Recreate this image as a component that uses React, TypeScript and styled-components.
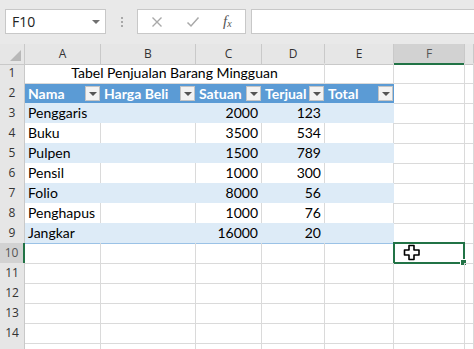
import React from "react";
import styled, { createGlobalStyle, css } from "styled-components";

const GlobalStyle = createGlobalStyle`
  html, body { margin: 0; padding: 0; background: #ffffff; }
  body { font-family: Lato, "Liberation Sans", sans-serif; overflow: hidden; }
`;

const COLS = "25px 76px 95px 66px 63px 69px 71px 1fr";
const GRID = "#dadada";
const GREEN = "#217346";
const BLUE = "#5b9bd5";
const BAND = "#ddebf7";
const LINE = "#9bc2e6";

type Row = { name: string; price: string; qty: number; sold: number };

const data: Row[] = [
  { name: "Penggaris", price: "", qty: 2000, sold: 123 },
  { name: "Buku", price: "", qty: 3500, sold: 534 },
  { name: "Pulpen", price: "", qty: 1500, sold: 789 },
  { name: "Pensil", price: "", qty: 1000, sold: 300 },
  { name: "Folio", price: "", qty: 8000, sold: 56 },
  { name: "Penghapus", price: "", qty: 1000, sold: 76 },
  { name: "Jangkar", price: "", qty: 16000, sold: 20 },
];

const headers = ["Nama", "Harga Beli", "Satuan", "Terjual", "Total"];
const letters = ["A", "B", "C", "D", "E", "F", ""];

export default function App() {
  return (
    <>
      <GlobalStyle />
      <Window>
        <FormulaBar>
          <NameBox>
            <span>F10</span>
            <Caret />
          </NameBox>
          <Grip>
            <i />
            <i />
            <i />
          </Grip>
          <FxBox>
            <svg width="12" height="12" viewBox="0 0 12 12">
              <path d="M1.5 1.5 L10.5 10.5 M10.5 1.5 L1.5 10.5" stroke="#a9a9a9" strokeWidth="1.4" fill="none" />
            </svg>
            <svg width="14" height="12" viewBox="0 0 14 12">
              <path d="M1.5 6.5 L5 10 L12.5 1.5" stroke="#a9a9a9" strokeWidth="1.5" fill="none" />
            </svg>
            <Fx>
              f<sub>x</sub>
            </Fx>
          </FxBox>
          <Input />
        </FormulaBar>

        <Sheet>
          <Line>
            <Corner />
            {letters.map((l, i) => (
              <ColHead key={i} active={l === "F"}>
                {l}
              </ColHead>
            ))}
          </Line>

          <Line>
            <RowHead>1</RowHead>
            <Title>Tabel Penjualan Barang Mingguan</Title>
            <Cell />
            <Cell />
            <Cell />
          </Line>

          <Line>
            <RowHead>2</RowHead>
            {headers.map((h) => (
              <Head key={h}>
                <span>{h}</span>
                <Filter />
              </Head>
            ))}
            <Cell />
            <Cell />
          </Line>

          {data.map((r, i) => {
            const band = i % 2 === 0;
            const last = i === data.length - 1;
            return (
              <Line key={r.name}>
                <RowHead>{i + 3}</RowHead>
                <Data band={band}>{r.name}</Data>
                <Data band={band}>{r.price}</Data>
                <Data band={band} right>
                  {r.qty}
                </Data>
                <Data band={band} right>
                  {r.sold}
                </Data>
                <Data band={band} edge={last} />
                <Cell />
                <Cell />
              </Line>
            );
          })}

          {[10, 11, 12, 13, 14, 15].map((n) => (
            <Line key={n}>
              <RowHead active={n === 10}>{n < 15 ? n : ""}</RowHead>
              {letters.map((l, i) => (
                <Cell key={i} selected={n === 10 && l === "F"}>
                  {n === 10 && l === "F" && (
                    <Pointer width="20" height="18" viewBox="0 0 20 18">
                      <path
                        d="M7 1.5 H12 V6 H17 V11 H12 V15.5 H7 V11 H2.5 V6 H7 Z"
                        fill="#fff"
                        stroke="#000"
                        strokeWidth="1.6"
                        strokeLinejoin="round"
                      />
                    </Pointer>
                  )}
                </Cell>
              ))}
            </Line>
          ))}
        </Sheet>
      </Window>
    </>
  );
}

const Window = styled.div`
  width: 474px;
  height: 349px;
  overflow: hidden;
  background: #e9e9e9;
`;

const FormulaBar = styled.div`
  height: 44px;
  display: flex;
  align-items: flex-start;
  padding: 9px 0 0 5px;
  box-sizing: border-box;
`;

const Box = styled.div`
  height: 25px;
  box-sizing: border-box;
  background: #fff;
  border: 1px solid #c8c8c8;
`;

const NameBox = styled(Box)`
  width: 101px;
  display: flex;
  align-items: center;
  justify-content: space-between;
  padding: 0 5px 0 6px;
  font-family: "Open Sans", sans-serif;
  font-size: 14px;
  color: #222;
`;

const Caret = styled.i`
  width: 0;
  height: 0;
  border-left: 4px solid transparent;
  border-right: 4px solid transparent;
  border-top: 4px solid #707070;
`;

const Grip = styled.div`
  width: 31px;
  height: 25px;
  display: flex;
  flex-direction: column;
  align-items: center;
  justify-content: center;
  gap: 2px;
  i {
    width: 2px;
    height: 2px;
    background: #a8a8a8;
  }
`;

const FxBox = styled(Box)`
  width: 109px;
  display: flex;
  align-items: center;
  padding-left: 13px;
  gap: 23px;
`;

const Fx = styled.span`
  font-family: "Liberation Serif", serif;
  font-style: italic;
  font-size: 15px;
  color: #555;
  sub {
    font-size: 10px;
    vertical-align: -1px;
  }
`;

const Input = styled(Box)`
  flex: 1;
  margin-left: 5px;
  border-right: none;
`;

const Sheet = styled.div`
  background: #fff;
`;

const Line = styled.div`
  display: grid;
  grid-template-columns: ${COLS};
  height: 20px;
  &:first-child {
    height: 19px;
  }
`;

const Corner = styled.div`
  background: #e6e6e6;
  border-right: 1px solid #c9c9c9;
  border-bottom: 1px solid #c9c9c9;
  position: relative;
  &::after {
    content: "";
    position: absolute;
    right: 3px;
    bottom: 3px;
    border-left: 11px solid transparent;
    border-bottom: 11px solid #b8b8b8;
  }
`;

const ColHead = styled.div<{ active?: boolean }>`
  background: ${(p) => (p.active ? "#d2d2d2" : "#e6e6e6")};
  border-right: 1px solid #c9c9c9;
  border-bottom: ${(p) => (p.active ? `2px solid ${GREEN}` : "1px solid #c9c9c9")};
  font-family: "Open Sans", sans-serif;
  font-size: 12px;
  line-height: 19px;
  text-align: center;
  color: ${(p) => (p.active ? "#555" : "#333")};
  box-sizing: border-box;
`;

const RowHead = styled.div<{ active?: boolean }>`
  background: ${(p) => (p.active ? "#d2d2d2" : "#e6e6e6")};
  border-right: ${(p) => (p.active ? `2px solid ${GREEN}` : "1px solid #c9c9c9")};
  border-bottom: 1px solid #d0d0d0;
  font-family: "Open Sans", sans-serif;
  font-size: 12px;
  line-height: 20px;
  text-align: center;
  color: ${(p) => (p.active ? "#555" : "#333")};
  box-sizing: border-box;
`;

const text = css`
  font-size: 14px;
  line-height: 19px;
  padding: 0 3px;
  white-space: nowrap;
  overflow: hidden;
  box-sizing: border-box;
`;

const Cell = styled.div<{ selected?: boolean }>`
  ${text};
  border-right: 1px solid ${GRID};
  border-bottom: 1px solid ${GRID};
  position: relative;
  overflow: visible;
  ${(p) =>
    p.selected &&
    css`
      &::before {
        content: "";
        position: absolute;
        left: -1px;
        top: -1px;
        right: -1px;
        bottom: -1px;
        border: 2px solid ${GREEN};
      }
      &::after {
        content: "";
        position: absolute;
        right: -3px;
        bottom: -3px;
        width: 5px;
        height: 5px;
        background: ${GREEN};
        border: 1px solid #fff;
      }
    `}
`;

const Title = styled(Cell)`
  grid-column: span 4;
  text-align: center;
  color: #000;
`;

const Head = styled.div`
  ${text};
  background: ${BLUE};
  color: #fff;
  font-weight: 700;
  display: flex;
  align-items: center;
  justify-content: space-between;
  padding-right: 1px;
  border-bottom: 1px solid ${BLUE};
`;

const Filter = styled.i`
  width: 15px;
  height: 15px;
  box-sizing: border-box;
  background: #f3f3f3;
  border: 1px solid #c4c4c4;
  flex: none;
  position: relative;
  &::after {
    content: "";
    position: absolute;
    left: 3px;
    top: 5px;
    border-left: 4px solid transparent;
    border-right: 4px solid transparent;
    border-top: 4px solid #555;
  }
`;

const Data = styled.div<{ band?: boolean; right?: boolean; edge?: boolean }>`
  ${text};
  color: #000;
  text-align: ${(p) => (p.right ? "right" : "left")};
  background: ${(p) => (p.band ? BAND : "#fff")};
  border-bottom: 1px solid ${LINE};
  border-right: 1px solid ${(p) => (p.band ? BAND : GRID)};
  position: relative;
  ${(p) =>
    p.edge &&
    css`
      &::after {
        content: "";
        position: absolute;
        right: -2px;
        bottom: -2px;
        border-left: 4px solid transparent;
        border-bottom: 4px solid #3d6fb0;
      }
    `}
`;

const Pointer = styled.svg`
  position: absolute;
  left: 8px;
  top: 1px;
`;
